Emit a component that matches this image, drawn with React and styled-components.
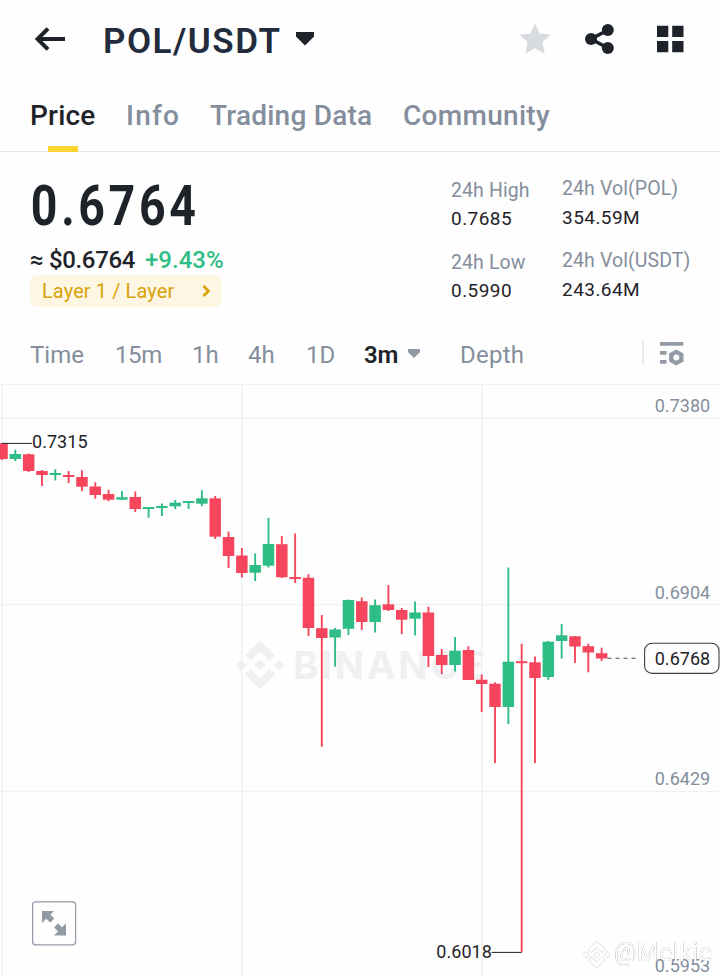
import React from 'react';
import styled, { createGlobalStyle } from 'styled-components';

const GlobalStyle = createGlobalStyle`
  * {
    box-sizing: border-box;
  }
  body {
    margin: 0;
    background: #fefefe;
    color: #1e2329;
    font-family: Roboto, "Liberation Sans", sans-serif;
  }
`;

const Page = styled.div`
  width: 720px;
  height: 976px;
  overflow: hidden;
  display: flex;
  flex-direction: column;
  background: #fefefe;
`;

const Header = styled.header`
  height: 80px;
  padding: 0 34px 2px 35px;
  display: flex;
  align-items: center;
  svg {
    display: block;
    flex: none;
  }
`;

const Pair = styled.h1`
  margin: 0 15px 0 38px;
  padding-top: 5px;
  width: 177px;
  white-space: nowrap;
  font-size: 35px;
  font-weight: 600;
  line-height: 73px;
  letter-spacing: 1.5px;
  color: #232c3d;
`;

const HeaderIcons = styled.div`
  margin-left: auto;
  display: flex;
  align-items: center;
  gap: 35px;
`;

const Tabs = styled.nav`
  height: 72px;
  padding-left: 30px;
  display: grid;
  grid-template-columns: 96px 84px 193px auto;
  border-bottom: 1px solid #e6e8ea;
`;

const Tab = styled.div`
  display: flex;
  flex-direction: column;
  justify-content: space-between;
  font-size: 28px;
  font-weight: 500;
  line-height: 72px;
  letter-spacing: ${(p) => p.$spacing || 0}px;
  white-space: nowrap;
  color: ${(p) => (p.$active ? '#1e2329' : '#848e9c')};
  span {
    height: 65px;
  }
`;

const Underline = styled.i`
  width: 30px;
  height: 6px;
  margin-left: 18px;
  background: #fcd535;
`;

const Ticker = styled.section`
  height: 174px;
  padding: 27px 0 0 30px;
  display: grid;
  grid-template-columns: 421px 111px auto;
`;

const LastPrice = styled.div`
  height: 54px;
  padding-left: 1px;
  font-size: 56px;
  font-weight: 700;
  line-height: 55px;
  letter-spacing: 4.4px;
  transform: scaleX(0.83);
  transform-origin: 0 0;
`;

const FiatRow = styled.div`
  height: 42px;
  padding-top: 8px;
  display: flex;
  gap: 10px;
  font-size: 24px;
  font-weight: 500;
  line-height: 39px;
  letter-spacing: -0.35px;
  white-space: nowrap;
`;

const Change = styled.span`
  color: #2ebd85;
  letter-spacing: 0;
`;

const Tag = styled.div`
  width: 192px;
  height: 32px;
  padding: 0 11px 0 12px;
  display: flex;
  align-items: center;
  justify-content: space-between;
  border-radius: 8px;
  background: #fdf6e3;
  color: #d9a20a;
  font-size: 20px;
  letter-spacing: 0.1px;
`;

const StatColumn = styled.div`
  display: flex;
  flex-direction: column;
  gap: 15px;
  margin-top: ${(p) => p.$top}px;
`;

const Stat = styled.div`
  font-size: 19.5px;
  line-height: 28.5px;
  white-space: nowrap;
`;

const StatLabel = styled.div`
  color: #848e9c;
  letter-spacing: 0.1px;
`;

const StatValue = styled.div`
  color: #1e2329;
  font-size: 19px;
  letter-spacing: 0.45px;
`;

const Intervals = styled.div`
  height: 58px;
  padding-left: 30px;
  display: grid;
  grid-template-columns: 85px 77px 56px 58px 58px 96px 182px auto;
  align-items: center;
`;

const Interval = styled.div`
  display: flex;
  align-items: center;
  gap: 9px;
  font-size: 24px;
  font-weight: ${(p) => (p.$active ? 600 : 400)};
  line-height: 58px;
  letter-spacing: ${(p) => p.$spacing || 0}px;
  color: ${(p) => (p.$active ? '#1e2329' : '#848e9c')};
`;

const Settings = styled.div`
  height: 24px;
  margin-top: -4px;
  padding-left: 16px;
  border-left: 2px solid #eaecef;
`;

const Chart = styled.svg`
  display: block;
  width: 720px;
  height: 592px;
  font-family: Roboto, "Liberation Sans", sans-serif;
  font-size: 18px;
`;

const AuthorMark = styled.g`
  fill: #fff;
  filter: drop-shadow(0.9px 0.9px 0.3px rgba(0, 0, 0, 0.6));
`;

const UP = '#2ebd85';
const DOWN = '#f6465d';

// [color, body top, body bottom, wick top, wick bottom]
const candles = [
  [DOWN, 443.3, 459, 443.3, 460],
  [UP, 454, 459, 449.7, 461],
  [DOWN, 454.3, 471, 453.5, 472],
  [DOWN, 471, 475, 470, 486],
  [UP, 473, 475, 469.2, 480.5],
  [DOWN, 475, 477, 471, 483],
  [DOWN, 477, 486.7, 470.3, 491],
  [DOWN, 486.5, 495, 482.3, 498.7],
  [DOWN, 494, 499.7, 489.7, 501.3],
  [UP, 497.2, 499.7, 491, 499.7],
  [DOWN, 497, 509, 491.5, 512],
  [UP, 507, 509, 507, 517.7],
  [UP, 506, 508, 503.5, 516],
  [UP, 502.7, 506.3, 500, 509],
  [UP, 501, 503, 501, 509],
  [UP, 498.3, 503.7, 490.3, 506],
  [DOWN, 498.3, 536.7, 496, 539],
  [DOWN, 537, 556, 531.5, 568],
  [DOWN, 555.5, 573, 548, 577.5],
  [UP, 565, 572.7, 553.5, 581],
  [UP, 544, 565.7, 518, 567.5],
  [DOWN, 544.2, 577.3, 536, 578],
  [DOWN, 577, 579, 533.5, 583],
  [DOWN, 577.7, 628, 574.2, 636],
  [DOWN, 628.2, 638, 615, 746.7],
  [UP, 629.5, 637.5, 628, 666.7],
  [UP, 600, 628.8, 599.5, 635],
  [DOWN, 601.2, 622, 597.5, 630],
  [UP, 605.2, 622, 599.5, 632.5],
  [DOWN, 604.3, 610, 585, 611],
  [DOWN, 610, 619.7, 608, 634],
  [UP, 612.5, 618.7, 601.5, 635.5],
  [DOWN, 612.5, 656, 606.7, 667],
  [DOWN, 655, 665, 649, 674],
  [UP, 650.7, 665, 637, 671.5],
  [DOWN, 650, 680, 646.3, 680],
  [DOWN, 679.7, 684, 674.5, 712],
  [DOWN, 683.7, 707, 682.3, 763],
  [UP, 661.7, 707, 567.5, 724],
  [DOWN, 661.2, 663.2, 643.7, 952.5],
  [DOWN, 662.3, 678, 656.5, 763],
  [UP, 641.7, 677, 641, 680],
  [UP, 635.3, 641, 624, 658.5],
  [DOWN, 636.3, 646.5, 636, 663],
  [DOWN, 646.2, 652.5, 643.7, 672.3],
  [DOWN, 653.2, 658.5, 647.7, 661],
];

const STEP = 13.325;

const stats = [
  {
    top: -2.5,
    items: [
      ['24h High', '0.7685'],
      ['24h Low', '0.5990'],
    ],
  },
  {
    top: -4,
    items: [
      ['24h Vol(POL)', '354.59M'],
      ['24h Vol(USDT)', '243.64M'],
    ],
  },
];

const axisLabels = [
  [412, '0.7380'],
  [599, '0.6904'],
  [785, '0.6429'],
  [972, '0.5953'],
];

function Logo({ x, y, scale, ...rest }) {
  return (
    <g transform={`translate(${x} ${y}) scale(${scale})`} {...rest}>
      <path d="M38.73 53.2 63.32 28.62l24.6 24.6 14.3-14.31L63.32 0 24.42 38.9z" />
      <path d="m0 63.31 14.3-14.31 14.31 14.31-14.31 14.3z" />
      <path d="M38.73 73.41 63.32 98l24.6-24.6 14.31 14.29-38.9 38.91-38.91-38.88z" />
      <path d="m98 63.31 14.3-14.31 14.31 14.3-14.31 14.32z" />
      <path d="M77.83 63.3 63.32 48.78 48.8 63.3l14.52 14.52z" />
    </g>
  );
}

function PriceChart() {
  return (
    <Chart viewBox="0 384 720 592">
      <g stroke="#eff1f3" strokeWidth="1.5">
        <path d="M0 384.3H720M0 418H720M0 604.5H720M0 791.5H720" />
        <path d="M2.3 384V976M242 384V976M481.7 384V976" />
      </g>

      <g fill="#eff1f1">
        <Logo x={235.5} y={640.4} scale={0.388} />
        <text
          x="293"
          y="679"
          fontFamily="Inter, sans-serif"
          fontSize="38.5"
          fontWeight="700"
          textLength="192"
        >
          BINANCE
        </text>
      </g>

      {candles.map(([color, top, bottom, high, low], i) => {
        const x = 2 + i * STEP;
        return (
          <g key={i} fill={color}>
            <rect x={x - 0.95} y={high} width="1.9" height={low - high} />
            <rect x={x - 5.75} y={top} width="11.5" height={bottom - top} />
          </g>
        );
      })}

      <path d="M2 443.4H32M491.5 952.4H521.5" stroke="#1e2329" strokeWidth="1" />
      <g fill="#1e2329">
        <text x="32" y="448" textLength="55.5">
          0.7315
        </text>
        <text x="436.3" y="958" textLength="55.5">
          0.6018
        </text>
      </g>

      <path
        d="M607.5 658.3H636"
        stroke="#474d57"
        strokeWidth="1.1"
        strokeDasharray="4 4"
      />
      <rect
        x="644.6"
        y="643.2"
        width="74.4"
        height="30.2"
        rx="7.5"
        fill="#fefefe"
        stroke="#3a4049"
        strokeWidth="1.1"
      />
      <text x="654.7" y="665" fill="#1e2329" textLength="55.5">
        0.6768
      </text>
      <g fill="#848e9c">
        {axisLabels.map(([y, label]) => (
          <text key={label} x="654.7" y={y} textLength="55.5">
            {label}
          </text>
        ))}
      </g>

      <rect
        x="32.6"
        y="901.8"
        width="43"
        height="43"
        rx="3"
        fill="#fefefe"
        stroke="#929aa8"
        strokeWidth="1.2"
      />
      <path
        fill="#929aa5"
        d="M42 911H54L50.4 914.6 54.2 918.4 50.2 922.6 46.2 918.8 42 923ZM66 935.5H54L58 931.5 54.2 927.6 57.8 923.6 62 927.3 66 923.5Z"
      />

      <AuthorMark>
        <Logo x={583} y={941} scale={0.215} />
        <text x="614" y="961" fontSize="25" textLength="98">
          @Melkie
        </text>
      </AuthorMark>
    </Chart>
  );
}

export default function App() {
  return (
    <>
      <GlobalStyle />
      <Page>
        <Header>
          <svg width="30" height="24" viewBox="0 0 30 24">
            <path
              d="M13 1.6 2.5 12 13 22.4M2.5 12H30"
              fill="none"
              stroke="#1e2329"
              strokeWidth="4"
            />
          </svg>
          <Pair>POL/USDT</Pair>
          <svg width="20" height="16" viewBox="0 0 20 16">
            <path d="M1 1H19V5.5L10 14.5 1 5.5Z" fill="#1e2329" />
          </svg>
          <HeaderIcons>
            <svg width="30" height="30" viewBox="0 0 30 30">
              <path
                d="M15 1 19 10.2 29 11.2 21.5 18 23.8 28.5 15 23.3 6.2 28.5 8.5 18 1 11.2 11 10.2Z"
                fill="#d8dce1"
                stroke="#d8dce1"
                strokeWidth="1.6"
                strokeLinejoin="round"
              />
            </svg>
            <svg width="30" height="30" viewBox="0 0 30 30">
              <g fill="#1e2329">
                <circle cx="6" cy="15" r="6" />
                <circle cx="22.8" cy="6" r="6" />
                <circle cx="22.8" cy="24" r="6" />
              </g>
              <path
                d="M23 6 6 15 23 24"
                fill="none"
                stroke="#1e2329"
                strokeWidth="3.6"
              />
            </svg>
            <svg width="36" height="28" viewBox="0 0 36 28">
              <path
                fill="#1e2329"
                d="M7 0.7H18.3V11.9H7ZM22.2 0.7H33.5V11.9H22.2ZM7 15.9H18.3V27.2H7ZM22.2 15.9H33.5V27.2H22.2Z"
              />
            </svg>
          </HeaderIcons>
        </Header>

        <Tabs>
          <Tab $active $spacing={0.2}>
            <span>Price</span>
            <Underline />
          </Tab>
          <Tab $spacing={1.2}>Info</Tab>
          <Tab $spacing={0.22}>Trading Data</Tab>
          <Tab $spacing={0.3}>Community</Tab>
        </Tabs>

        <Ticker>
          <div>
            <LastPrice>0.6764</LastPrice>
            <FiatRow>
              <span>≈ $0.6764</span>
              <Change>+9.43%</Change>
            </FiatRow>
            <Tag>
              Layer 1 / Layer
              <svg width="9" height="12" viewBox="0 0 9 12">
                <path
                  d="M1.5 1 6.5 6 1.5 11"
                  fill="none"
                  stroke="#d9a20a"
                  strokeWidth="2.6"
                />
              </svg>
            </Tag>
          </div>
          {stats.map((column) => (
            <StatColumn key={column.top} $top={column.top}>
              {column.items.map(([label, value]) => (
                <Stat key={label}>
                  <StatLabel>{label}</StatLabel>
                  <StatValue>{value}</StatValue>
                </Stat>
              ))}
            </StatColumn>
          ))}
        </Ticker>

        <Intervals>
          <Interval>Time</Interval>
          <Interval $spacing={-0.4}>15m</Interval>
          <Interval>1h</Interval>
          <Interval>4h</Interval>
          <Interval>1D</Interval>
          <Interval $active $spacing={-0.3}>
            3m
            <svg width="14" height="12" viewBox="0 0 14 12">
              <path d="M1 0H13V3.2L7 9 1 3.2Z" fill="#929aa5" />
            </svg>
          </Interval>
          <Interval $spacing={0.25}>Depth</Interval>
          <Settings>
            <svg width="24" height="26" viewBox="0 0 24 26">
              <g fill="#929aa5">
                <path d="M0 1H23.3V4.7H0ZM0 10H6.5V13.7H0ZM0 19H6.5V22.7H0Z" />
                <path
                  fillRule="evenodd"
                  d="M16.3 8.6 23.5 12.6V20.6L16.3 24.6 9.1 20.6V12.6ZM16.3 13.6A3 3 0 1 0 16.3 19.6 3 3 0 1 0 16.3 13.6Z"
                />
              </g>
            </svg>
          </Settings>
        </Intervals>

        <PriceChart />
      </Page>
    </>
  );
}
